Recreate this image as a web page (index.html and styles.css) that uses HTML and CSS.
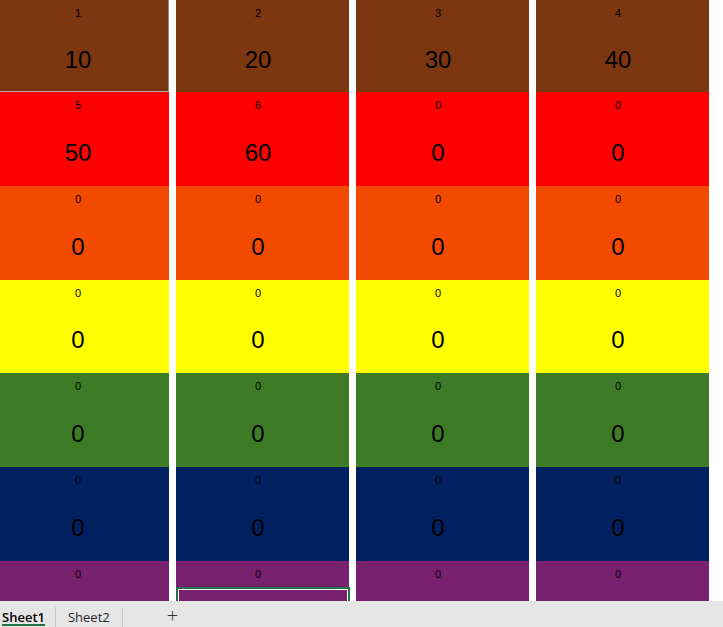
FILE: index.html
```html
<!DOCTYPE html>
<html lang="en">
<head>
    <meta charset="UTF-8">
    <meta name="viewport" content="width=device-width, initial-scale=1.0">
    <title>Sheet1</title>
    <link rel="stylesheet" href="styles.css">
</head>
<body>
    <div class="sheet">
        <div class="grid">
            <!-- column 1 -->
            <div class="col">
                <div class="block brown top gridline"><div class="idx">1</div><div class="val">10</div></div>
                <div class="block red"><div class="idx">5</div><div class="val">50</div></div>
                <div class="block orange"><div class="idx">0</div><div class="val">0</div></div>
                <div class="block yellow"><div class="idx">0</div><div class="val">0</div></div>
                <div class="block green"><div class="idx">0</div><div class="val">0</div></div>
                <div class="block navy"><div class="idx">0</div><div class="val">0</div></div>
                <div class="block purple"><div class="idx">0</div><div class="val"></div></div>
            </div>
            <!-- column 2 -->
            <div class="col">
                <div class="block brown top"><div class="idx">2</div><div class="val">20</div></div>
                <div class="block red"><div class="idx">6</div><div class="val">60</div></div>
                <div class="block orange"><div class="idx">0</div><div class="val">0</div></div>
                <div class="block yellow"><div class="idx">0</div><div class="val">0</div></div>
                <div class="block green"><div class="idx">0</div><div class="val">0</div></div>
                <div class="block navy"><div class="idx">0</div><div class="val">0</div></div>
                <div class="block purple"><div class="idx">0</div><div class="val selected"></div></div>
            </div>
            <!-- column 3 -->
            <div class="col">
                <div class="block brown top"><div class="idx">3</div><div class="val">30</div></div>
                <div class="block red"><div class="idx">0</div><div class="val">0</div></div>
                <div class="block orange"><div class="idx">0</div><div class="val">0</div></div>
                <div class="block yellow"><div class="idx">0</div><div class="val">0</div></div>
                <div class="block green"><div class="idx">0</div><div class="val">0</div></div>
                <div class="block navy"><div class="idx">0</div><div class="val">0</div></div>
                <div class="block purple"><div class="idx">0</div><div class="val"></div></div>
            </div>
            <!-- column 4 -->
            <div class="col">
                <div class="block brown top"><div class="idx">4</div><div class="val">40</div></div>
                <div class="block red"><div class="idx">0</div><div class="val">0</div></div>
                <div class="block orange"><div class="idx">0</div><div class="val">0</div></div>
                <div class="block yellow"><div class="idx">0</div><div class="val">0</div></div>
                <div class="block green"><div class="idx">0</div><div class="val">0</div></div>
                <div class="block navy"><div class="idx">0</div><div class="val">0</div></div>
                <div class="block purple"><div class="idx">0</div><div class="val"></div></div>
            </div>
        </div>
    </div>

    <div class="tabs">
        <div class="tab active">Sheet1</div>
        <div class="tab">Sheet2</div>
        <div class="add">+</div>
    </div>
</body>
</html>
```

FILE: styles.css
```css
html, body {
    margin: 0;
    padding: 0;
    height: 627px;
    overflow: hidden;
    background: #ffffff;
}

body {
    font-family: 'Liberation Sans', Arial, sans-serif;
    color: #000000;
}

.sheet {
    height: 601px;
    overflow: hidden;
}

.grid {
    display: grid;
    grid-template-columns: 173px 173px 173px 173px;
    column-gap: 7px;
    margin-left: -4px;
}

.col {
    display: flex;
    flex-direction: column;
}

.block {
    display: flex;
    flex-direction: column;
    flex-shrink: 0;
    height: 93.8px;
}

.block.top {
    height: 92px;
}

.gridline {
    box-shadow: inset 0 -1px 0 #b8b0a8, inset -1px 0 0 #9c8a7c;
}

.idx {
    height: 26px;
    flex-shrink: 0;
    display: flex;
    align-items: center;
    justify-content: center;
    padding-right: 9px;
    font-size: 11px;
}

.val {
    flex: 1;
    display: flex;
    align-items: center;
    justify-content: center;
    padding: 2px 9px 0 0;
    font-size: 24px;
    box-sizing: border-box;
}

.selected {
    border: 2px solid #217346;
    margin-right: -1px;
    box-shadow: inset 0 0 0 1px #ffffff;
}

.brown { background: #7c3610; }
.red { background: #ff0000; }
.orange { background: #f24a00; }
.yellow { background: #ffff00; }
.green { background: #3e7b26; }
.navy { background: #002060; }
.purple { background: #78216f; }

.tabs {
    height: 26px;
    background: #e6e6e6;
    display: flex;
    align-items: stretch;
    font-family: 'Open Sans', 'Noto Sans', sans-serif;
    font-size: 13px;
    color: #262626;
}

.tab {
    display: flex;
    align-items: center;
    padding: 0 12px;
    border-right: 1px solid #c8c8c8;
    margin: 6px 0 0 0;
}

.tab.active {
    padding: 0 10px 0 2px;
    font-weight: 600;
    color: #000000;
    position: relative;
}

.tab.active::after {
    content: "";
    position: absolute;
    left: 2px;
    right: 10px;
    bottom: 1px;
    height: 2px;
    background: #217346;
}

.add {
    display: flex;
    align-items: center;
    padding: 3px 0 0 44px;
    font-size: 20px;
    line-height: 20px;
    font-weight: 300;
    color: #333333;
}
```
